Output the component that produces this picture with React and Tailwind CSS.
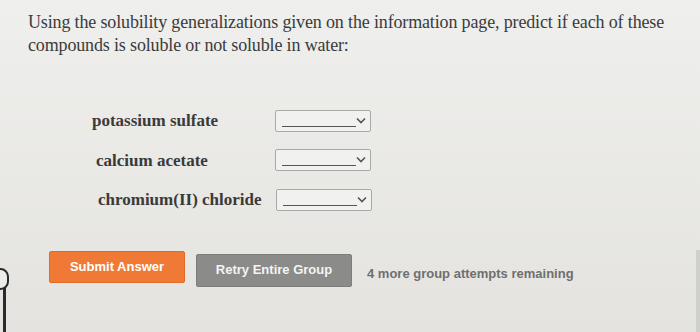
import React from 'react';

const compounds = [
  { name: 'potassium sulfate', pad: 'pl-[92px]', gap: 'w-[183px]' },
  { name: 'calcium acetate', pad: 'pl-[96px]', gap: 'w-[179px]' },
  { name: 'chromium(II) chloride', pad: 'pl-[98px]', gap: 'w-[178px]' },
];

const Select = () => (
  <div className="w-[96px] h-[22px] border border-[#a9a9a9] bg-[#f1f1ef] rounded-[2px] flex items-end pl-[6px] pr-[4px] pb-[4px]">
    <span className="w-[74px] border-b border-[#555]" />
    <svg width="10" height="7" viewBox="0 0 10 7" className="ml-auto mb-[3px]">
      <path d="M1 1.5 L5 5.5 L9 1.5" fill="none" stroke="#555" strokeWidth="1.6" />
    </svg>
  </div>
);

export default function App() {
  return (
    <div className="relative w-[700px] h-[332px] overflow-hidden bg-gradient-to-b from-[#efefed] to-[#e4e3df]">
      <div className="pl-[28px] pr-[20px] pt-[11px] text-[18px] leading-[23px] tracking-[-0.15px] text-[#3b3b3b]" style={{ fontFamily: '"Liberation Serif", serif' }}>
        <p>
          Using the solubility generalizations given on the information page, predict if each of these
          <br />
          compounds is soluble or not soluble in water:
        </p>
      </div>

      <div className="mt-[51px] flex flex-col gap-[14px]" style={{ fontFamily: '"Liberation Serif", serif' }}>
        {compounds.map((c) => (
          <div key={c.name} className={`flex items-center ${c.pad}`}>
            <span className={`${c.gap} shrink-0 text-[17px] font-bold text-[#3a3a3a]`}>{c.name}</span>
            <Select />
          </div>
        ))}
      </div>

      <div className="mt-[38px] pl-[49px] flex items-start" style={{ fontFamily: '"Liberation Sans", Arial, sans-serif' }}>
        <button className="w-[136px] h-[32px] bg-[#f07a35] border border-[#e06a2a] rounded-[2px] text-white text-[13px] font-bold">
          Submit Answer
        </button>
        <button className="ml-[11px] mt-[3px] w-[156px] h-[33px] bg-[#8b8b8a] border border-[#7d7d7d] rounded-[2px] text-[#f4f4f4] text-[13px] font-bold">
          Retry Entire Group
        </button>
        <span className="ml-[15px] mt-[13px] text-[13px] font-bold text-[#6f6f6f]">4 more group attempts remaining</span>
      </div>

      {/* photo edge artefacts */}
      <div className="absolute left-[3px] top-[288px] w-[3px] h-[44px] bg-[#2a2a2e]" />
      <div className="absolute left-[-8px] top-[268px] w-[17px] h-[22px] rounded-full border-2 border-[#2a2a2e] bg-[#ececea]" />
      <div className="absolute right-0 top-[250px] w-[4px] h-[82px] bg-[#cfcfcc]" />
    </div>
  );
}
